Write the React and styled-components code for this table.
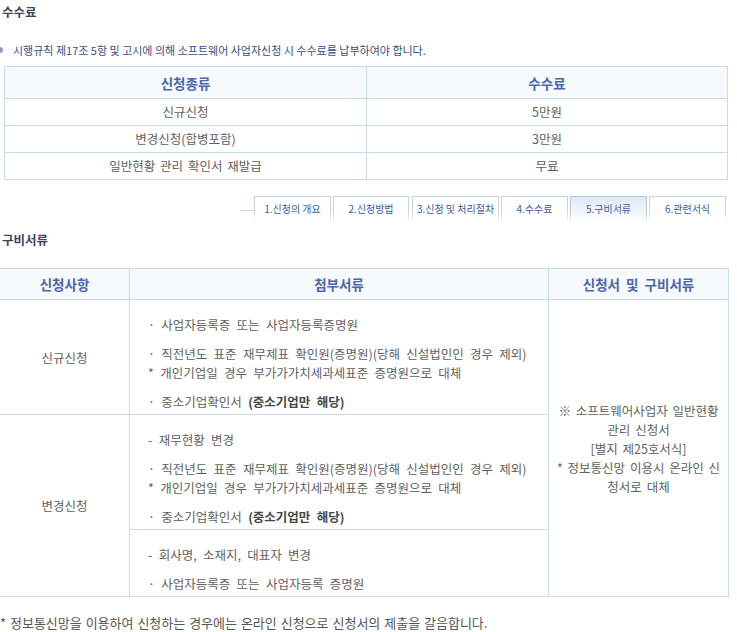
import React from 'react';
import styled, { createGlobalStyle } from 'styled-components';

const GlobalStyle = createGlobalStyle`
  html, body {
    margin: 0;
    padding: 0;
    background: #fff;
  }
  body {
    font-family: "Noto Sans CJK KR", "Noto Sans", sans-serif;
    color: #5f5f5f;
    overflow: hidden;
  }
`;

const Page = styled.div`
  width: 737px;
  display: flex;
  flex-direction: column;
`;

const SectionTitle = styled.h3`
  margin: ${(p) => p.$top || 0}px 0 0 2px;
  font-size: 12.5px;
  line-height: 18px;
  font-weight: 700;
  color: #3d4660;
`;

const Lead = styled.p`
  display: flex;
  align-items: center;
  margin: 21px 0 0;
  font-size: 11px;
  line-height: 16px;
  color: #34508a;

  &::before {
    content: '';
    width: 6px;
    height: 6px;
    border-radius: 50%;
    background: #8c9cb9;
    margin-left: -3px;
    margin-right: 10px;
  }
`;

const BaseTable = styled.table`
  border-collapse: collapse;
  table-layout: fixed;
  font-size: 12.5px;
  word-spacing: 2px;
  color: #5f5f5f;

  th, td {
    border: 1px solid #c6dcec;
    text-align: center;
    padding: 0;
  }

  th {
    background: #f6f9fe;
    color: #4a66ad;
    font-weight: 700;
    font-size: 13.5px;
    word-spacing: 3px;
  }
`;

const FeeTable = styled(BaseTable)`
  margin: 8px 0 0 4px;
  width: 724px;

  th {
    height: 31px;
  }
  td {
    height: 26px;
    line-height: 18px;
  }
`;

const TabBar = styled.div`
  display: flex;
  align-items: flex-start;
  height: 26px;
  margin-top: 16px;
  padding-left: 240px;
`;

const TabLine = styled.div`
  width: 14px;
  margin-top: 14px;
  border-top: 1px solid #c9d6ea;
`;

const Tab = styled.div`
  box-sizing: border-box;
  width: ${(p) => p.$w}px;
  height: 26px;
  margin-right: ${(p) => p.$gap}px;
  padding-top: 4px;
  text-align: center;
  font-size: 10px;
  line-height: 16px;
  color: #3a5aa6;
  white-space: nowrap;
  border: 1px solid transparent;
  border-bottom: none;
  border-image: linear-gradient(
      to bottom,
      ${(p) => (p.$active ? '#b3c5e4' : '#c5d3eb')} 55%,
      rgba(255, 255, 255, 0)
    )
    1;
  background: ${(p) =>
    p.$active ? 'linear-gradient(to bottom, #dfe8f6, #ffffff)' : '#fff'};
`;

const DocTable = styled(BaseTable)`
  margin: 19px 0 0 -1px;
  width: 730px;

  th {
    height: 30px;
  }
`;

const LabelCell = styled.td`
  line-height: 19px;
`;

const ItemsCell = styled.td`
  && {
    text-align: left;
    vertical-align: top;
    padding: 5px 8px 3px 18px;
    word-spacing: 3.5px;
  }
`;

const Item = styled.p`
  margin: 10px 0 0;
  line-height: 19px;
  white-space: nowrap;
`;

const Strong = styled.b`
  display: inline-block;
  vertical-align: top;
  line-height: 19px;
  color: #454545;
  font-weight: 700;
`;

const FormCell = styled.td`
  line-height: 19px;
  white-space: nowrap;
`;

const Note = styled.p`
  margin: 17px 0 0;
  font-size: 13px;
  line-height: 18px;
  word-spacing: 1px;
  color: #555;
`;

const fees = [
  ['신규신청', '5만원'],
  ['변경신청(합병포함)', '3만원'],
  ['일반현황 관리 확인서 재발급', '무료'],
];

const tabs = [
  { label: '1.신청의 개요', w: 77, gap: 2 },
  { label: '2.신청방법', w: 76, gap: 3 },
  { label: '3.신청 및 처리절차', w: 87, gap: 2 },
  { label: '4.수수료', w: 67, gap: 2 },
  { label: '5.구비서류', w: 77, gap: 2, active: true },
  { label: '6.관련서식', w: 77, gap: 0 },
];

export default function App() {
  return (
    <>
      <GlobalStyle />
      <Page>
        <SectionTitle $top={3}>수수료</SectionTitle>
        <Lead>시행규칙 제17조 5항 및 고시에 의해 소프트웨어 사업자신청 시 수수료를 납부하여야 합니다.</Lead>

        <FeeTable>
          <colgroup>
            <col style={{ width: 362 }} />
            <col />
          </colgroup>
          <thead>
            <tr>
              <th>신청종류</th>
              <th>수수료</th>
            </tr>
          </thead>
          <tbody>
            {fees.map(([kind, fee]) => (
              <tr key={kind}>
                <td>{kind}</td>
                <td>{fee}</td>
              </tr>
            ))}
          </tbody>
        </FeeTable>

        <TabBar>
          <TabLine />
          {tabs.map((t) => (
            <Tab key={t.label} $w={t.w} $gap={t.gap} $active={t.active}>
              {t.label}
            </Tab>
          ))}
        </TabBar>

        <SectionTitle $top={9}>구비서류</SectionTitle>

        <DocTable>
          <colgroup>
            <col style={{ width: 130 }} />
            <col style={{ width: 419 }} />
            <col />
          </colgroup>
          <thead>
            <tr>
              <th>신청사항</th>
              <th>첨부서류</th>
              <th>신청서 및 구비서류</th>
            </tr>
          </thead>
          <tbody>
            <tr>
              <LabelCell>신규신청</LabelCell>
              <ItemsCell>
                <Item>· 사업자등록증 또는 사업자등록증명원</Item>
                <Item>
                  · 직전년도 표준 재무제표 확인원(증명원)(당해 신설법인인 경우 제외)
                  <br />* 개인기업일 경우 부가가가치세과세표준 증명원으로 대체
                </Item>
                <Item>
                  · 중소기업확인서 <Strong>(중소기업만 해당)</Strong>
                </Item>
              </ItemsCell>
              <FormCell rowSpan={3}>
                ※ 소프트웨어사업자 일반현황
                <br />관리 신청서
                <br />[별지 제25호서식]
                <br />* 정보통신망 이용시 온라인 신
                <br />청서로 대체
              </FormCell>
            </tr>
            <tr>
              <LabelCell rowSpan={2}>변경신청</LabelCell>
              <ItemsCell>
                <Item>- 재무현황 변경</Item>
                <Item>
                  · 직전년도 표준 재무제표 확인원(증명원)(당해 신설법인인 경우 제외)
                  <br />* 개인기업일 경우 부가가가치세과세표준 증명원으로 대체
                </Item>
                <Item>
                  · 중소기업확인서 <Strong>(중소기업만 해당)</Strong>
                </Item>
              </ItemsCell>
            </tr>
            <tr>
              <ItemsCell>
                <Item>- 회사명, 소재지, 대표자 변경</Item>
                <Item>· 사업자등록증 또는 사업자등록 증명원</Item>
              </ItemsCell>
            </tr>
          </tbody>
        </DocTable>

        <Note>* 정보통신망을 이용하여 신청하는 경우에는 온라인 신청으로 신청서의 제출을 갈음합니다.</Note>
      </Page>
    </>
  );
}
